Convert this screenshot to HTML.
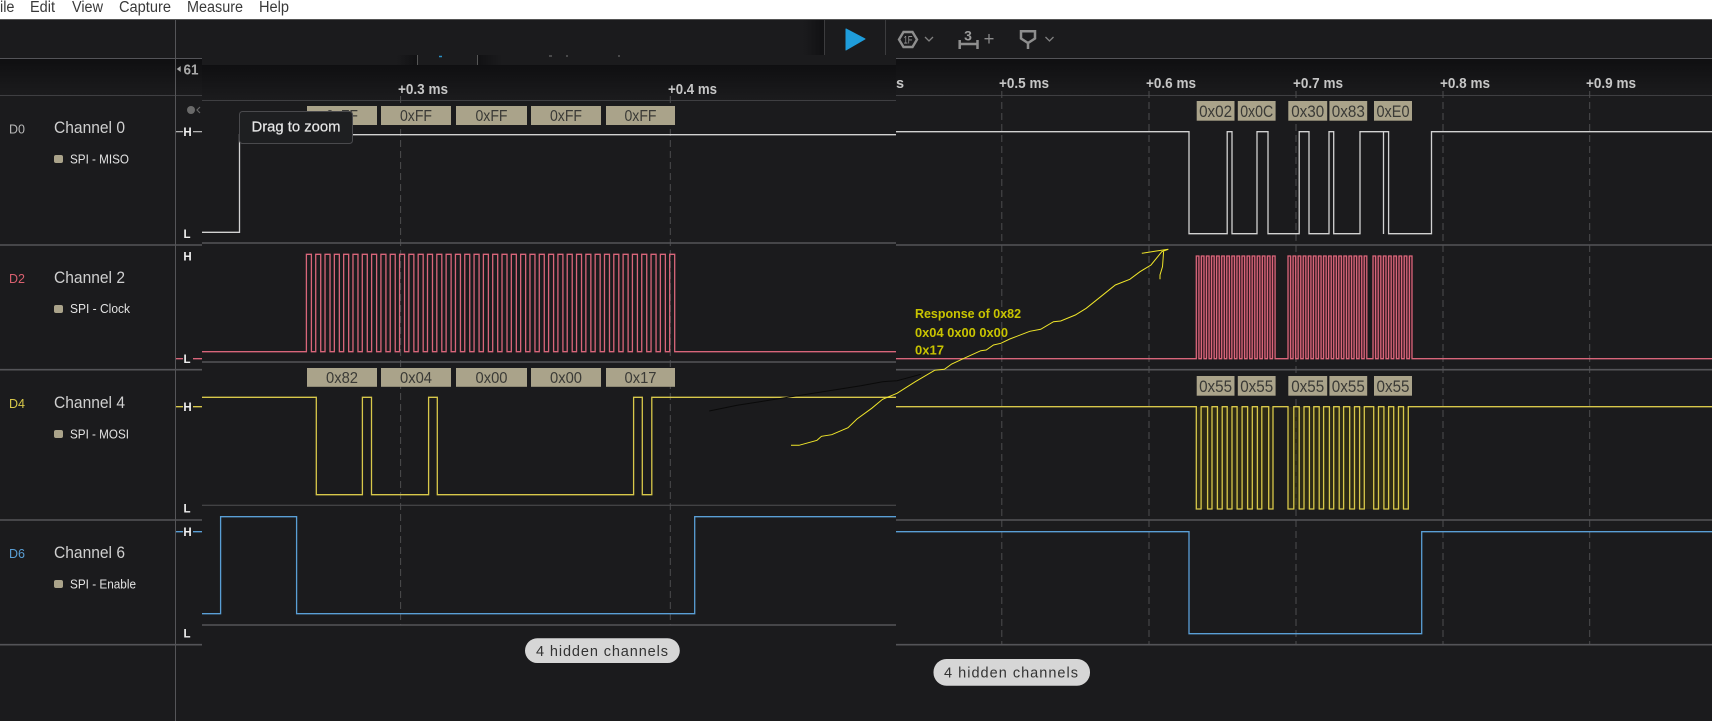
<!DOCTYPE html>
<html lang="en">
<head>
<meta charset="utf-8">
<title>Logic Analyzer SPI Capture</title>
<style>
html,body{margin:0;padding:0;width:1712px;height:721px;overflow:hidden;background:#1b1b1d}
svg{display:block}
text{font-family:"Liberation Sans",sans-serif}
.menu{font-size:15.5px;fill:#3a3a3a}
.t{font-size:14.5px;font-weight:bold;fill:#c6c6c6}
.dec{font-size:15.5px;fill:#3a3a36;text-anchor:middle}
.dec2{font-size:17px;fill:#3a3a36;text-anchor:middle}
.hl{font-size:11.5px;font-weight:bold;fill:#eee;text-anchor:middle}
.ch{font-size:17px;fill:#cfcfcf}
.sub{font-size:13px;fill:#e2e2e2}
.id{font-size:13px}
.ann{font-size:12.5px;font-weight:bold;fill:#c9c400}
.pill{font-size:14.5px;fill:#333}
.sig{fill:none;stroke-width:1.3}
.grid{stroke:#4c4c4e;stroke-width:1;stroke-dasharray:7 4;fill:none}
.sep{stroke:#545458;stroke-width:1.6;fill:none}
.thin{stroke:#3f3f42;stroke-width:1;fill:none}
</style>
</head>
<body>
<svg width="1712" height="721" viewBox="0 0 1712 721" xmlns="http://www.w3.org/2000/svg">
<defs>
<linearGradient id="g1" x1="0" y1="0" x2="0" y2="1"><stop offset="0" stop-color="#0f0f11"/><stop offset="1" stop-color="#1b1b1d"/></linearGradient>
<linearGradient id="fl" x1="0" y1="0" x2="1" y2="0"><stop offset="0" stop-color="#1b1b1d"/><stop offset="1" stop-color="#111113"/></linearGradient>
<linearGradient id="fr" x1="0" y1="0" x2="1" y2="0"><stop offset="0" stop-color="#111113"/><stop offset="1" stop-color="#1b1b1d"/></linearGradient>
</defs>

<rect width="1712" height="721" fill="#1b1b1d"/>
<!-- menu bar -->
<rect width="1712" height="19" fill="#fff"/>
<line x1="0" y1="19.500" x2="1712" y2="19.500" stroke="#555" stroke-width="1"/>
<text class="menu" x="0" y="12" textLength="14.500" lengthAdjust="spacingAndGlyphs">ile</text>
<text class="menu" x="30" y="12" textLength="25" lengthAdjust="spacingAndGlyphs">Edit</text>
<text class="menu" x="72" y="12" textLength="31" lengthAdjust="spacingAndGlyphs">View</text>
<text class="menu" x="119" y="12" textLength="52" lengthAdjust="spacingAndGlyphs">Capture</text>
<text class="menu" x="187" y="12" textLength="56" lengthAdjust="spacingAndGlyphs">Measure</text>
<text class="menu" x="259" y="12" textLength="30" lengthAdjust="spacingAndGlyphs">Help</text>

<!-- toolbar -->
<rect x="803" y="20" width="21" height="38" fill="url(#fl)"/>
<line x1="824.500" y1="20" x2="824.500" y2="58" stroke="#3c3c3e"/>
<line x1="885.500" y1="20" x2="885.500" y2="58" stroke="#3c3c3e"/>
<path d="M846 29 L865 39 L846 50 Z" fill="#1f9ddb" stroke="#1f9ddb" stroke-width="1" stroke-linejoin="round"/>
<polygon points="899,39.500 903.500,32 912.500,32 917,39.500 912.500,47 903.500,47" fill="none" stroke="#8e8e8e" stroke-width="2.400"/>
<text x="908" y="43.500" font-size="11" fill="#9a9a9a" text-anchor="middle" textLength="9" lengthAdjust="spacingAndGlyphs">1F</text>
<path d="M925 37 L929 41 L933 37" fill="none" stroke="#808080" stroke-width="1.300"/>
<text x="968" y="40.500" font-size="14" font-weight="bold" fill="#9a9a9a" text-anchor="middle">3</text>
<path d="M959.700 40 V49 M977.500 40 V49 M959.700 44 H977.500" fill="none" stroke="#8e8e8e" stroke-width="2.500"/>
<path d="M984.500 38.700 H993.500 M989 34 V43.500" fill="none" stroke="#8a8a8a" stroke-width="1.300"/>
<path d="M1021 31.200 H1035 V38.500 L1028 43 L1021 38.500 Z M1028 43 V49" fill="none" stroke="#8e8e8e" stroke-width="2.500"/>
<path d="M1045.500 37 L1049.500 41 L1053.500 37" fill="none" stroke="#808080" stroke-width="1.300"/>

<!-- right ruler -->
<rect x="0" y="59" width="1712" height="36" fill="url(#g1)"/>
<line class="sep" x1="0" y1="58.500" x2="1712" y2="58.500" style="stroke-width:1"/>
<line class="thin" x1="0" y1="95.500" x2="1712" y2="95.500"/>
<text class="t" x="896" y="88">s</text>
<text class="t" x="999" y="88" textLength="50" lengthAdjust="spacingAndGlyphs">+0.5 ms</text>
<text class="t" x="1146" y="88" textLength="50" lengthAdjust="spacingAndGlyphs">+0.6 ms</text>
<text class="t" x="1293" y="88" textLength="50" lengthAdjust="spacingAndGlyphs">+0.7 ms</text>
<text class="t" x="1440" y="88" textLength="50" lengthAdjust="spacingAndGlyphs">+0.8 ms</text>
<text class="t" x="1586" y="88" textLength="50" lengthAdjust="spacingAndGlyphs">+0.9 ms</text>

<!-- right grid -->
<path class="grid" d="M1001.800 91 V645 M1149 91 V645 M1296 91 V645 M1443 91 V645 M1589.700 91 V645"/>
<!-- separators -->
<path class="sep" d="M0 245 H1712 M0 369.700 H1712 M0 520 H1712 M0 644.700 H1712"/>

<!-- right: decoders -->
<g fill="#aaa38a">
<rect x="1196.700" y="101" width="37.800" height="19.700"/><rect x="1237.800" y="101" width="37.800" height="19.700"/><rect x="1288.300" y="101" width="38.900" height="19.700"/><rect x="1329.400" y="101" width="37.800" height="19.700"/><rect x="1374" y="101" width="38" height="19.700"/>
<rect x="1196.700" y="376" width="37.800" height="19.700"/><rect x="1237.800" y="376" width="37.800" height="19.700"/><rect x="1288.300" y="376" width="38.900" height="19.700"/><rect x="1329.400" y="376" width="37.800" height="19.700"/><rect x="1374" y="376" width="38" height="19.700"/>
</g>
<text class="dec2" x="1215.600" y="116.800" textLength="33" lengthAdjust="spacingAndGlyphs">0x02</text><text class="dec2" x="1256.700" y="116.800" textLength="33" lengthAdjust="spacingAndGlyphs">0x0C</text><text class="dec2" x="1307.700" y="116.800" textLength="33" lengthAdjust="spacingAndGlyphs">0x30</text><text class="dec2" x="1348.300" y="116.800" textLength="33" lengthAdjust="spacingAndGlyphs">0x83</text><text class="dec2" x="1393" y="116.800" textLength="33" lengthAdjust="spacingAndGlyphs">0xE0</text>
<text class="dec2" x="1215.600" y="391.800" textLength="33" lengthAdjust="spacingAndGlyphs">0x55</text><text class="dec2" x="1256.700" y="391.800" textLength="33" lengthAdjust="spacingAndGlyphs">0x55</text><text class="dec2" x="1307.700" y="391.800" textLength="33" lengthAdjust="spacingAndGlyphs">0x55</text><text class="dec2" x="1348.300" y="391.800" textLength="33" lengthAdjust="spacingAndGlyphs">0x55</text><text class="dec2" x="1393" y="391.800" textLength="33" lengthAdjust="spacingAndGlyphs">0x55</text>

<!-- right MISO -->
<path class="sig" stroke="#d2d2d2" d="M896 131.700 H1189 V233.700 H1227.200 V131.700 H1232 V233.700 H1257 V131.700 H1268 V233.700 H1299.200 V131.700 H1309 V233.700 H1329 V131.700 H1333.700 V233.700 H1360 V131.700 H1388.600 V233.700 H1431.500 V131.700 H1712 M1383.500 131.700 V234"/>

<!-- right clock -->
<g fill="#4a1626" opacity=".55"><rect x="1196.300" y="256" width="79" height="102"/><rect x="1288" y="256" width="79" height="102"/><rect x="1373" y="256" width="39" height="102"/></g>
<path class="sig" stroke="#d9667a" d="M896 358.700 H1196.300 v-102.700h2.600v102.700h2.480v-102.700h2.600v102.700h2.480v-102.700h2.600v102.700h2.480v-102.700h2.600v102.700h2.480v-102.700h2.600v102.700h2.480v-102.700h2.600v102.700h2.480v-102.700h2.600v102.700h2.480v-102.700h2.600v102.700h2.480v-102.700h2.600v102.700h2.480v-102.700h2.600v102.700h2.480v-102.700h2.600v102.700h2.480v-102.700h2.600v102.700h2.480v-102.700h2.600v102.700h2.480v-102.700h2.600v102.700h2.480v-102.700h2.600v102.700h2.480v-102.700h2.600v102.700 H1288 v-102.700h2.600v102.700h2.480v-102.700h2.600v102.700h2.480v-102.700h2.600v102.700h2.480v-102.700h2.600v102.700h2.480v-102.700h2.600v102.700h2.480v-102.700h2.600v102.700h2.480v-102.700h2.600v102.700h2.480v-102.700h2.600v102.700h2.480v-102.700h2.600v102.700h2.480v-102.700h2.600v102.700h2.480v-102.700h2.600v102.700h2.480v-102.700h2.600v102.700h2.480v-102.700h2.600v102.700h2.480v-102.700h2.600v102.700h2.480v-102.700h2.600v102.700h2.480v-102.700h2.600v102.700 H1373 v-102.700h2.600v102.700h2.600v-102.700h2.600v102.700h2.600v-102.700h2.600v102.700h2.600v-102.700h2.600v102.700h2.600v-102.700h2.600v102.700h2.600v-102.700h2.600v102.700h2.600v-102.700h2.600v102.700h2.600v-102.700h2.600v102.700 H1712"/>

<!-- right MOSI -->
<g fill="#3a3512" opacity=".6"><rect x="1196.300" y="407" width="76.700" height="102"/><rect x="1288" y="407" width="120.300" height="102"/></g>
<path class="sig" stroke="#d8c84a" d="M896 406.700 H1196.300 V509 H1201.100 V406.700 H1207.600 V509 H1212 V406.700 H1217.400 V509 H1222.200 V406.700 H1227.200 V509 H1232 V406.700 H1237.100 V509 H1242.100 V406.700 H1247.600 V509 H1252.300 V406.700 H1257.400 V509 H1261.800 V406.700 H1268.700 V509 H1273 V406.700 H1288 V509 H1293.800 V406.700 H1299.200 V509 H1304 V406.700 H1309.400 V509 H1313.800 V406.700 H1319.200 V509 H1323.600 V406.700 H1329.400 V509 H1333.700 V406.700 H1339.200 V509 H1343.600 V406.700 H1349.700 V509 H1354.500 V406.700 H1359.600 V509 H1364.300 V406.700 H1373.700 V509 H1378.500 V406.700 H1383.900 V509 H1388.600 V406.700 H1393.700 V509 H1398.500 V406.700 H1403.500 V509 H1408.300 V406.700 H1712"/>

<!-- right enable -->
<path class="sig" stroke="#5a9fd6" d="M896 531.700 H1189 V633.700 H1421.700 V531.700 H1712"/>

<!-- right pill -->
<rect x="933.500" y="659" width="156.500" height="26.700" rx="13" fill="#d6d6d6"/>
<text class="pill" x="944" y="677.500" textLength="134" lengthAdjust="spacing">4 hidden channels</text>

<!-- left column -->
<line x1="175.500" y1="20" x2="175.500" y2="721" stroke="#555558"/>
<rect x="176" y="59.500" width="26" height="35" fill="url(#g1)"/>
<polygon points="180.700,66 176.700,69 180.700,72" fill="#a8a8a8"/>
<text x="183.500" y="74.500" font-size="15" font-weight="bold" fill="#a8a8a8" textLength="15" lengthAdjust="spacingAndGlyphs">61</text>
<circle cx="191" cy="110" r="4" fill="#6a6a6a"/>
<path d="M200 107 L197 110 L200 113" fill="none" stroke="#666" stroke-width="1.200"/>

<path stroke="#c8c8c8" stroke-width="1.200" d="M176 131.700 H183 M193 131.700 H202"/>
<path stroke="#d9667a" stroke-width="1.400" d="M176 358.700 H183 M193 358.700 H202"/>
<path stroke="#d8c84a" stroke-width="1.400" d="M176 406.700 H183 M193 406.700 H202"/>
<path stroke="#5a9fd6" stroke-width="1.400" d="M176 531.700 H183 M193 531.700 H202"/>
<text class="hl" x="187.500" y="136">H</text>
<text class="hl" x="187" y="238">L</text>
<text class="hl" x="187.500" y="260.500">H</text>
<text class="hl" x="187" y="363">L</text>
<text class="hl" x="187.500" y="411">H</text>
<text class="hl" x="187" y="512.500">L</text>
<text class="hl" x="187.500" y="536">H</text>
<text class="hl" x="187" y="637.500">L</text>

<!-- channel labels -->
<text class="id" x="9" y="133.500" fill="#b8b8b8" textLength="16" lengthAdjust="spacingAndGlyphs">D0</text>
<text class="ch" x="54" y="133" textLength="71" lengthAdjust="spacingAndGlyphs">Channel 0</text>
<rect x="54" y="155" width="9" height="8" rx="2" fill="#aaa38a"/>
<text class="sub" x="70" y="163.500" textLength="59" lengthAdjust="spacingAndGlyphs">SPI - MISO</text>

<text class="id" x="9" y="283" fill="#d9606f" textLength="16" lengthAdjust="spacingAndGlyphs">D2</text>
<text class="ch" x="54" y="283" textLength="71" lengthAdjust="spacingAndGlyphs">Channel 2</text>
<rect x="54" y="305" width="9" height="8" rx="2" fill="#aaa38a"/>
<text class="sub" x="70" y="313" textLength="60" lengthAdjust="spacingAndGlyphs">SPI - Clock</text>

<text class="id" x="9" y="408" fill="#d8c84a" textLength="16" lengthAdjust="spacingAndGlyphs">D4</text>
<text class="ch" x="54" y="408" textLength="71" lengthAdjust="spacingAndGlyphs">Channel 4</text>
<rect x="54" y="430" width="9" height="8" rx="2" fill="#aaa38a"/>
<text class="sub" x="70" y="438.500" textLength="59" lengthAdjust="spacingAndGlyphs">SPI - MOSI</text>

<text class="id" x="9" y="558" fill="#5a9fd6" textLength="16" lengthAdjust="spacingAndGlyphs">D6</text>
<text class="ch" x="54" y="558" textLength="71" lengthAdjust="spacingAndGlyphs">Channel 6</text>
<rect x="54" y="580" width="9" height="8" rx="2" fill="#aaa38a"/>
<text class="sub" x="70" y="588.500" textLength="66" lengthAdjust="spacingAndGlyphs">SPI - Enable</text>

<!-- OVERLAY pasted image -->
<rect x="202" y="55" width="694" height="666" fill="#1b1b1d"/>
<rect x="397" y="55" width="20" height="10" fill="url(#fl)"/>
<rect x="477" y="55" width="25" height="10" fill="url(#fr)"/>
<path stroke="#555" d="M417.500 55 V65 M477.500 55 V65"/>
<path stroke="#2a8fc4" stroke-width="1.500" d="M439 56.500 H442"/>
<path stroke="#777" stroke-width="1" d="M549 56 H552 M566 56 H568 M618 56 H620"/>
<rect x="202" y="65" width="694" height="35" fill="url(#g1)"/>
<line class="thin" x1="202" y1="100.500" x2="896" y2="100.500"/>
<text class="t" x="398" y="94" textLength="50" lengthAdjust="spacingAndGlyphs">+0.3 ms</text>
<text class="t" x="668" y="94" textLength="49" lengthAdjust="spacingAndGlyphs">+0.4 ms</text>

<path class="grid" d="M400.600 96 V625 M670.300 96 V625"/>
<path class="sep" d="M202 243 H896 M202 362 H896 M202 625 H896"/>
<line x1="202" y1="505.300" x2="896" y2="505.300" stroke="#4f4f52" stroke-width="1"/>

<!-- overlay decoders -->
<g fill="#aaa38a">
<rect x="307" y="106" width="70" height="19"/><rect x="381" y="106" width="70" height="19"/><rect x="456" y="106" width="71" height="19"/><rect x="531" y="106" width="70" height="19"/><rect x="606" y="106" width="69" height="19"/>
<rect x="307" y="368" width="70" height="18.800"/><rect x="381" y="368" width="70" height="18.800"/><rect x="456" y="368" width="71" height="18.800"/><rect x="531" y="368" width="70" height="18.800"/><rect x="606" y="368" width="69" height="18.800"/>
</g>
<text class="dec" x="342" y="121" textLength="32" lengthAdjust="spacingAndGlyphs">0xFF</text><text class="dec" x="416" y="121" textLength="32" lengthAdjust="spacingAndGlyphs">0xFF</text><text class="dec" x="491.500" y="121" textLength="32" lengthAdjust="spacingAndGlyphs">0xFF</text><text class="dec" x="566" y="121" textLength="32" lengthAdjust="spacingAndGlyphs">0xFF</text><text class="dec" x="640.500" y="121" textLength="32" lengthAdjust="spacingAndGlyphs">0xFF</text>
<text class="dec" x="342" y="383" textLength="32" lengthAdjust="spacingAndGlyphs">0x82</text><text class="dec" x="416" y="383" textLength="32" lengthAdjust="spacingAndGlyphs">0x04</text><text class="dec" x="491.500" y="383" textLength="32" lengthAdjust="spacingAndGlyphs">0x00</text><text class="dec" x="566" y="383" textLength="32" lengthAdjust="spacingAndGlyphs">0x00</text><text class="dec" x="640.500" y="383" textLength="32" lengthAdjust="spacingAndGlyphs">0x17</text>

<!-- overlay MISO -->
<path class="sig" stroke="#d2d2d2" d="M202 232.300 H239.500 V134.700 H896"/>

<!-- overlay clock: 40 pulses -->
<path class="sig" stroke="#d9667a" d="M202 351.700 H306.400
v-97.400h5v97.400h4.315v-97.400h5v97.400h4.315v-97.400h5v97.400h4.315v-97.400h5v97.400h4.315v-97.400h5v97.400h4.315
v-97.400h5v97.400h4.315v-97.400h5v97.400h4.315v-97.400h5v97.400h4.315v-97.400h5v97.400h4.315v-97.400h5v97.400h4.315
v-97.400h5v97.400h4.315v-97.400h5v97.400h4.315v-97.400h5v97.400h4.315v-97.400h5v97.400h4.315v-97.400h5v97.400h4.315
v-97.400h5v97.400h4.315v-97.400h5v97.400h4.315v-97.400h5v97.400h4.315v-97.400h5v97.400h4.315v-97.400h5v97.400h4.315
v-97.400h5v97.400h4.315v-97.400h5v97.400h4.315v-97.400h5v97.400h4.315v-97.400h5v97.400h4.315v-97.400h5v97.400h4.315
v-97.400h5v97.400h4.315v-97.400h5v97.400h4.315v-97.400h5v97.400h4.315v-97.400h5v97.400h4.315v-97.400h5v97.400h4.315
v-97.400h5v97.400h4.315v-97.400h5v97.400h4.315v-97.400h5v97.400h4.315v-97.400h5v97.400h4.315v-97.400h5v97.400h4.315
v-97.400h5v97.400h4.315v-97.400h5v97.400h4.315v-97.400h5v97.400h4.315v-97.400h5v97.400h4.315v-97.400h5v97.400
H896"/>

<!-- overlay MOSI -->
<path class="sig" stroke="#d8c84a" d="M202 397.300 H316.300 V494.700 H362.400 V397.300 H371.500 V494.700 H428.600 V397.300 H437.300 V494.700 H633.600 V397.300 H642.300 V494.700 H651.800 V397.300 H896"/>

<!-- overlay enable -->
<path class="sig" stroke="#5a9fd6" d="M202 613.700 H220.600 V516.700 H296.600 V613.700 H694.700 V516.700 H896"/>

<!-- tooltip -->
<rect x="239.500" y="111.500" width="113" height="32" rx="3" fill="#1e1f21" stroke="#4a4a4d"/>
<text x="251.500" y="131.500" font-size="14.500" fill="#e6e6e6" stroke="#e6e6e6" stroke-width=".2" textLength="89" lengthAdjust="spacingAndGlyphs">Drag to zoom</text>

<!-- left pill -->
<rect x="525" y="638.300" width="154.800" height="24.700" rx="12.300" fill="#d6d6d6"/>
<text class="pill" x="536" y="656" textLength="132" lengthAdjust="spacing">4 hidden channels</text>

<!-- annotations -->
<text class="ann" x="915" y="318" textLength="106" lengthAdjust="spacingAndGlyphs">Response of 0x82</text>
<text class="ann" x="915" y="337" textLength="93" lengthAdjust="spacingAndGlyphs">0x04 0x00 0x00</text>
<text class="ann" x="915" y="354.500" textLength="29" lengthAdjust="spacingAndGlyphs">0x17</text>

<path fill="none" stroke="#0a0a0a" stroke-width="1" d="M709.200 411 L737.200 405.300 L788 397.300 L860.800 385.700 L882.600 381.700 L897 380.700 L920.800 374.300"/>
<path fill="none" stroke="#f0e62a" stroke-width="1" d="M791 445.300 L799 445.300 L817 440.300 L821.500 436.300 L831.700 434.700 L848 427.700 L857 419 L871.700 408.300 L882.600 399.300 L897 393.300 L915.300 381.700 L934.600 370.300 L944.400 369.300 L951.700 364 L966.200 357.300 L980.800 350.700 L986.200 350 L993.500 345 L1000.800 343.300 L1009.800 339 L1029.800 331.300 L1040.700 329.300 L1053.500 321.700 L1060.700 321 L1075.300 315 L1086.200 308.300 L1100.700 296.700 L1115.300 285 L1129.800 279.300 L1140 271.700 L1151 265 L1161.800 251.700 L1168.400 249.300 M1141.800 253.300 L1156.400 251 L1168.400 249.300 M1163.600 251.700 L1162.500 266.700 L1160 275 L1160 279.300"/>
</svg>
</body>
</html>
